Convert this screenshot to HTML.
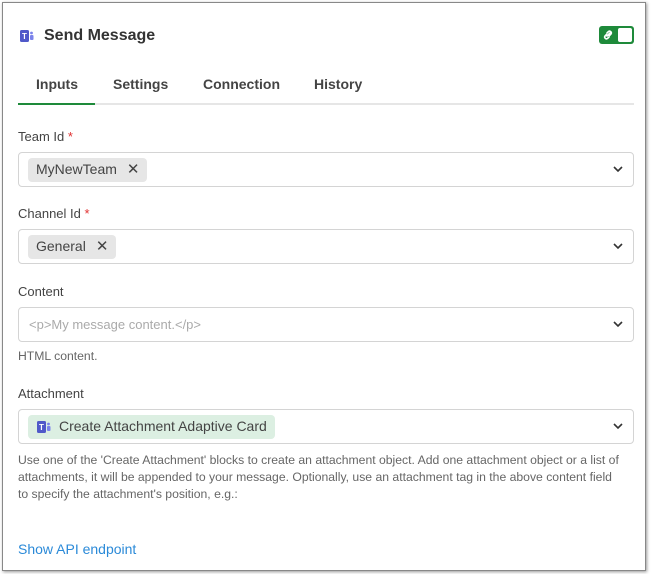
<!DOCTYPE html>
<html><head><style>
*{box-sizing:border-box;margin:0;padding:0}
body{width:653px;height:574px;background:#fff;font-family:"Liberation Sans",sans-serif;position:relative;overflow:hidden;color:#333}
.frame{position:absolute;left:2px;top:2px;width:644px;height:569px;border:1px solid #888;box-shadow:1px 1px 3px #999;background:#fff}
.abs{position:absolute;white-space:nowrap}
.lbl{font-size:13px;color:#444}
.req{color:#e03030}
.box{position:absolute;left:18px;width:616px;height:35px;border:1px solid #d4d4d4;border-radius:4px;background:#fff}
.chev{position:absolute;right:10px;top:11px}
.chip{position:absolute;left:9px;top:5px;height:24px;background:#e6e6e6;border-radius:4px;font-size:14px;color:#444;padding:3px 8px;line-height:17px}
.x{display:inline-block;margin-left:10px;font-size:15px;color:#444}
.help{font-size:12.2px;color:#666;line-height:17px}
</style></head><body>
<div class="frame"></div>
<svg class="abs" style="left:20px;top:30px" width="14" height="12" viewBox="0 0 14 12"><rect x="0" y="0" width="9" height="12" rx="1.5" fill="#5059c9"/><text x="2" y="9" font-size="8" fill="#fff" font-family="Liberation Sans" font-weight="bold">T</text><circle cx="11.5" cy="3" r="1.4" fill="#7b83eb"/><rect x="10" y="5" width="3.5" height="5" rx="1" fill="#7b83eb"/></svg>
<div class="abs" style="left:44px;top:27px;font-size:16px;font-weight:bold;color:#333">Send Message</div>
<div class="abs" style="left:599px;top:26px;width:35px;height:18px;background:#1e8a3a;border-radius:3px"></div>
<div class="abs" style="left:618px;top:28px;width:14px;height:14px;background:#fff;border-radius:2px"></div>
<svg class="abs" style="left:602px;top:29px" width="12" height="12" viewBox="0 0 12 12"><path d="M5 7l3-3M4.5 5.5l-1.5 1.5a1.8 1.8 0 0 0 2.5 2.5l1.5-1.5M7.5 6.5l1.5-1.5a1.8 1.8 0 0 0-2.5-2.5L5 4" stroke="#fff" stroke-width="1.6" fill="none" stroke-linecap="round"/></svg>
<div class="abs" style="left:18px;top:103px;width:616px;height:2px;background:#e6e6e6"></div>
<div class="abs" style="left:18px;top:103px;width:77px;height:2px;background:#1e8a3a"></div>
<div class="abs" style="left:36px;top:76px;font-size:14px;font-weight:bold;color:#444">Inputs</div>
<div class="abs" style="left:113px;top:76px;font-size:14px;font-weight:bold;color:#444">Settings</div>
<div class="abs" style="left:203px;top:76px;font-size:14px;font-weight:bold;color:#444">Connection</div>
<div class="abs" style="left:314px;top:76px;font-size:14px;font-weight:bold;color:#444">History</div>

<div class="abs lbl" style="left:18px;top:129px">Team Id <span class="req">*</span></div>
<div class="box" style="top:152px"><div class="chip">MyNewTeam<span class="x">✕</span></div><svg class="chev" width="10" height="10" viewBox="0 0 10 10"><path d="M1 3l4 4 4-4" stroke="#333" stroke-width="1.6" fill="none"/></svg></div>
<div class="abs lbl" style="left:18px;top:206px">Channel Id <span class="req">*</span></div>
<div class="box" style="top:229px"><div class="chip">General<span class="x">✕</span></div><svg class="chev" width="10" height="10" viewBox="0 0 10 10"><path d="M1 3l4 4 4-4" stroke="#333" stroke-width="1.6" fill="none"/></svg></div>
<div class="abs lbl" style="left:18px;top:284px">Content</div>
<div class="box" style="top:307px"><div class="abs" style="left:10px;top:9px;font-size:13px;color:#aaa">&lt;p&gt;My message content.&lt;/p&gt;</div><svg class="chev" width="10" height="10" viewBox="0 0 10 10"><path d="M1 3l4 4 4-4" stroke="#333" stroke-width="1.6" fill="none"/></svg></div>
<div class="abs help" style="left:18px;top:348px">HTML content.</div>
<div class="abs lbl" style="left:18px;top:386px">Attachment</div>
<div class="box" style="top:409px"><div class="chip" style="background:#dcefe2;padding-left:31px">Create Attachment Adaptive Card</div>
<svg class="abs" style="left:18px;top:11px" width="14" height="12" viewBox="0 0 14 12"><rect x="0" y="0" width="9" height="12" rx="1.5" fill="#5059c9"/><text x="2" y="9" font-size="8" fill="#fff" font-family="Liberation Sans" font-weight="bold">T</text><circle cx="11.5" cy="3" r="1.4" fill="#7b83eb"/><rect x="10" y="5" width="3.5" height="5" rx="1" fill="#7b83eb"/></svg>
<svg class="chev" width="10" height="10" viewBox="0 0 10 10"><path d="M1 3l4 4 4-4" stroke="#333" stroke-width="1.6" fill="none"/></svg></div>
<div class="abs help" style="left:18px;top:452px">Use one of the 'Create Attachment' blocks to create an attachment object. Add one attachment object or a list of<br>attachments, it will be appended to your message. Optionally, use an attachment tag in the above content field<br>to specify the attachment's position, e.g.:</div>
<div class="abs" style="left:18px;top:541px;font-size:14px;color:#2b8ad8">Show API endpoint</div>
</body></html>
